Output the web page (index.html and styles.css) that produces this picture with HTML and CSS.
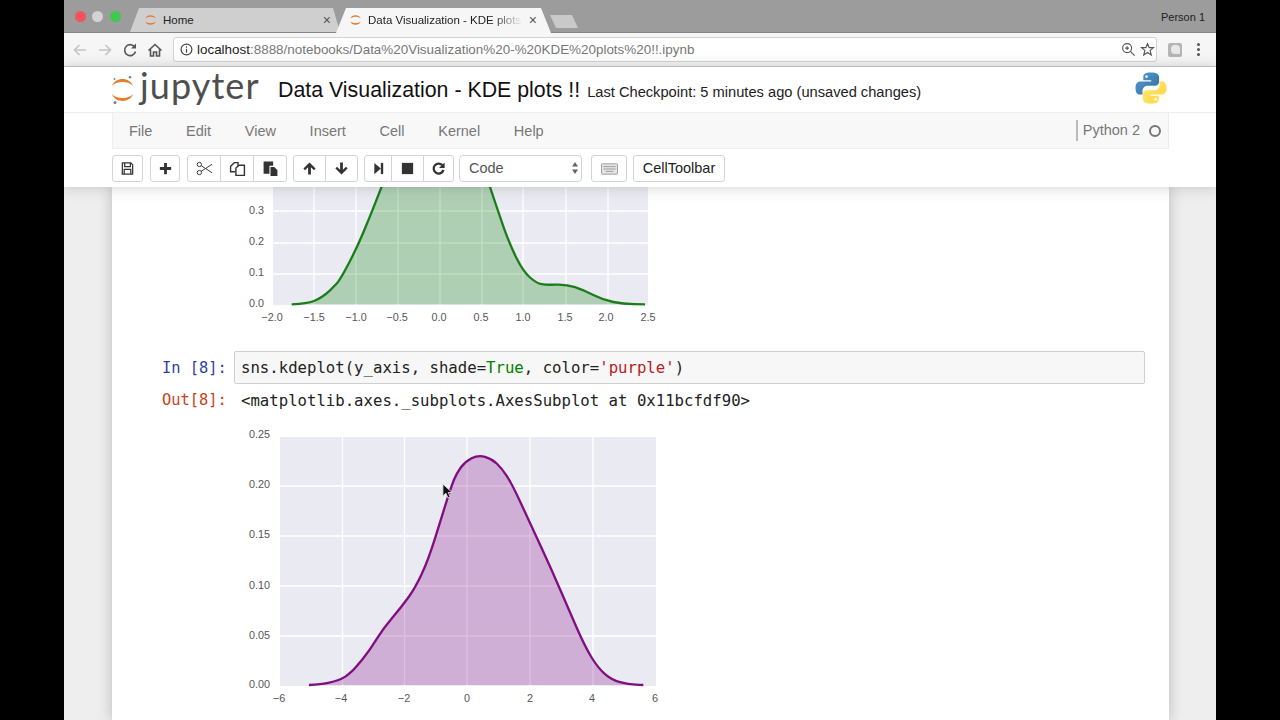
FILE: index.html
```html
<!DOCTYPE html>
<html lang="en">
  <head>
    <meta charset="UTF-8" />
    <title>Data Visualization - KDE plots !!</title>
    <link rel="stylesheet" href="styles.css">
  </head>
  <body>
    <div class="screen">
      <div class="tabstrip">
        <div class="traffic">
          <span class="light red"></span>
          <span class="light grey"></span>
          <span class="light green"></span>
        </div>
        <div class="tab home-tab">
          <svg class="favicon" viewBox="0 0 21 28"><path d="M0 11C3 2.500 18 2.500 21 11C17 6.500 4 6.500 0 11Z"/><path d="M0 17C3 25.500 18 25.500 21 17C17 21.500 4 21.500 0 17Z"/></svg>
          <span class="tab-title">Home</span>
          <span class="tab-close">×</span>
        </div>
        <div class="tab active-tab">
          <svg class="favicon" viewBox="0 0 21 28"><path d="M0 11C3 2.500 18 2.500 21 11C17 6.500 4 6.500 0 11Z"/><path d="M0 17C3 25.500 18 25.500 21 17C17 21.500 4 21.500 0 17Z"/></svg>
          <span class="tab-title fade">Data Visualization - KDE plots</span>
          <span class="tab-close">×</span>
        </div>
        <div class="new-tab"></div>
        <div class="person">Person 1</div>
      </div>

      <div class="navbar">
        <svg class="nav-icon" viewBox="0 0 16 16"><path class="off" d="M14 8H2.500M7.500 3L2.500 8L7.500 13"/></svg>
        <svg class="nav-icon" viewBox="0 0 16 16"><path class="off" d="M2 8H13.500M8.500 3L13.500 8L8.500 13"/></svg>
        <svg class="nav-icon" viewBox="0 0 16 16"><path d="M13 5.500A5.500 5.500 0 1 0 13.500 9.500"/><path class="solid" d="M14 1.500V6.500H9Z"/></svg>
        <svg class="nav-icon" viewBox="0 0 16 16"><path d="M1.500 8.500L8 2.500L14.500 8.500M3.500 7.500V14H6.500V10H9.500V14H12.500V7.500"/></svg>
        <div class="urlbar">
          <svg class="url-info" viewBox="0 0 14 14"><circle cx="7" cy="7" r="5.800"/><path d="M7 6.200V10.500M7 3.500V5"/></svg>
          <span class="url"><b>localhost</b>:8888/notebooks/Data%20Visualization%20-%20KDE%20plots%20!!.ipynb</span>
          <svg class="url-icon" viewBox="0 0 16 16"><circle cx="6.500" cy="6.500" r="4.800"/><path d="M10 10L14.500 14.500M4.500 6.500H8.500M6.500 4.500V8.500"/></svg>
          <svg class="url-icon" viewBox="0 0 16 16"><path d="M8 1.800L9.800 6H14.400L10.800 9L12 13.800L8 11.200L4 13.800L5.200 9L1.600 6H6.200Z"/></svg>
        </div>
        <div class="extension"><span class="blob"></span></div>
        <div class="dots"><span></span><span></span><span></span></div>
      </div>

      <div class="jp-header">
        <div class="title-row">
          <div class="logo">
            <svg class="logo-mark" viewBox="0 0 21 28">
              <path class="arc" d="M0 10C3 .700 18 .700 21 10C17 4.700 4 4.700 0 10Z"/>
              <path class="arc" d="M0 18C3 27.300 18 27.300 21 18C17 23.300 4 23.300 0 18Z"/>
              <circle class="moon" cx="18" cy="1.300" r="1.300"/>
              <circle class="moon" cx="2.500" cy="3" r="1"/>
              <circle class="moon" cx="3" cy="26.500" r="1.500"/>
            </svg>
            <span class="logo-text">jupyter</span>
          </div>
          <span class="nb-title">Data Visualization - KDE plots !!</span>
          <span class="checkpoint">Last Checkpoint: 5 minutes ago (unsaved changes)</span>
          <svg class="python-logo" viewBox="0 0 32 32">
            <defs>
              <linearGradient id="pyblue" x1="0" y1="0" x2="1" y2="1"><stop offset="0" stop-color="#5a9fd4"/><stop offset="1" stop-color="#306998"/></linearGradient>
              <linearGradient id="pyyellow" x1="0" y1="0" x2="1" y2="1"><stop offset="0" stop-color="#ffe873"/><stop offset="1" stop-color="#ffd43b"/></linearGradient>
            </defs>
            <path fill="url(#pyblue)" d="M15.800 .5c-6.200 0-7.500 2-7.500 4.500v3.300h7.900v1.200H5.100C2.200 9.500 .5 11.700 .5 16s1.700 6.600 4.200 6.600h2.800v-3.800c0-2.700 2.300-5 5-5h7.600c2.300 0 4-1.900 4-4.100V5c0-2.400-2.300-4.500-8.300-4.500z"/>
            <circle cx="11.500" cy="4.600" r="1.300" fill="#fff"/>
            <path fill="url(#pyyellow)" d="M16.200 31.500c6.200 0 7.500-2 7.500-4.500v-3.300h-7.900v-1.200h11.100c2.900 0 4.600-2.200 4.600-6.500s-1.700-6.600-4.200-6.600h-2.800v3.800c0 2.700-2.300 5-5 5h-7.600c-2.300 0-4 1.900-4 4.100V27c0 2.400 2.300 4.500 8.300 4.500z"/>
            <circle cx="20.500" cy="27.400" r="1.300" fill="#fff"/>
          </svg>
        </div>

        <div class="menubar">
          <span class="menu-item">File</span>
          <span class="menu-item">Edit</span>
          <span class="menu-item">View</span>
          <span class="menu-item">Insert</span>
          <span class="menu-item">Cell</span>
          <span class="menu-item">Kernel</span>
          <span class="menu-item">Help</span>
          <div class="kernel">
            <span class="kernel-name">Python 2</span>
            <span class="kernel-state"></span>
          </div>
        </div>

        <div class="toolbar">
          <div class="btn-group group-save">
            <button class="tool-btn">
              <svg class="tool-icon line" viewBox="0 0 16 16"><path d="M2.500 2H11.500L13.500 4V14H2.500ZM5 2V6H11V2M4.500 14V9H11.500V14"/></svg>
            </button>
          </div>
          <div class="btn-group group-add">
            <button class="tool-btn">
              <svg class="tool-icon" viewBox="0 0 16 16"><path d="M6.500 2H9.500V6.500H14V9.500H9.500V14H6.500V9.500H2V6.500H6.500Z"/></svg>
            </button>
          </div>
          <div class="btn-group group-edit">
            <button class="tool-btn">
              <svg class="tool-icon line thin" viewBox="0 0 18 16"><circle cx="3.500" cy="3.700" r="2.300"/><circle cx="3.500" cy="12.300" r="2.300"/><path d="M5.500 5L17 12.500M5.500 11L17 3.500"/></svg>
            </button>
            <button class="tool-btn">
              <svg class="tool-icon tall line" viewBox="0 0 16 16"><path d="M6 11H1.500V6L5 2.500H8.500V5.500"/><path d="M6.500 7.500L9.500 5H14.500V14.500H6.500Z"/></svg>
            </button>
            <button class="tool-btn">
              <svg class="tool-icon tall" viewBox="0 0 16 16"><path d="M1.500 1.500H10.500V5.500H7V13H1.500Z"/><path d="M8 6.500H11.500L14.500 9.500V15H8Z"/></svg>
            </button>
          </div>
          <div class="btn-group group-move">
            <button class="tool-btn">
              <svg class="tool-icon" viewBox="0 0 16 16"><path d="M8 1.500L14.500 8L12.800 9.800L9.500 6.600V14.500H6.500V6.600L3.200 9.800L1.500 8Z"/></svg>
            </button>
            <button class="tool-btn">
              <svg class="tool-icon" viewBox="0 0 16 16"><path d="M8 14.500L1.500 8L3.200 6.200L6.500 9.400V1.500H9.500V9.400L12.800 6.200L14.500 8Z"/></svg>
            </button>
          </div>
          <div class="btn-group group-run">
            <button class="tool-btn run-step">
              <svg class="tool-icon" viewBox="0 0 16 16"><path d="M3.500 2L10.500 8L3.500 14Z"/><path d="M10.500 2H13V14H10.500Z"/></svg>
            </button>
            <button class="tool-btn run-stop">
              <svg class="tool-icon" viewBox="0 0 16 16"><path d="M2 2H14V14H2Z"/></svg>
            </button>
            <button class="tool-btn run-redo">
              <svg class="tool-icon" viewBox="0 0 16 16"><path class="redo-arc" d="M12.500 5A5.300 5.300 0 1 0 13.300 9.500"/><path d="M14.500 1.500V7.500H8.500Z"/></svg>
            </button>
          </div>
          <div class="cell-type">
            <span>Code</span>
            <svg class="carets" viewBox="0 0 8 14"><path d="M4 1L7 5.500H1ZM4 13L1 8.500H7Z"/></svg>
          </div>
          <button class="tool-btn keyboard">
            <svg class="kbd-icon" viewBox="0 0 18 12"><rect x=".5" y=".5" width="17" height="11" rx="1"/><path d="M2.500 3.500H15.500M2.500 6H15.500M5 8.500H13"/></svg>
          </button>
          <button class="tool-btn celltoolbar">CellToolbar</button>
        </div>
      </div>

      <div class="notebook-area">
        <div class="notebook">
          <svg class="plot plot-green" width="440" height="145" viewBox="230 187 440 145">
            <rect class="axes" x="273" y="187" width="375" height="118"/>
            <path class="grid" d="M314 187V305M356 187V305M398 187V305M440 187V305M482 187V305M523 187V305M566 187V305M608 187V305M273 211H648M273 243H648M273 274H648"/>
            <path class="kde kde-green" d="M291.700 304.300Q300 304 305 303.200Q310 302.500 314 301Q318 299.500 322 296.800Q326 294 329.500 290.800Q333 287.500 336.500 283.800Q340 280 348.300 264.200Q356.700 248.300 363.300 232.500Q370 216.700 375.800 201.700Q381.700 186.700 388 170L395 150L478 150L484 170Q490 186.700 494 199Q498.300 211.700 504 228.400Q510 245 516.600 258.300Q523.300 271.700 530 277.500Q536.700 283.300 541.700 284.200Q546.700 285 556.700 284.600Q566.700 284.300 575 287.200Q583.300 290 593.300 295Q603.300 300 613.300 302Q623.300 304 634 304.200Q640 304.300 645 304.300"/>
            <g class="tick tick-y">
              <text x="264" y="214">0.3</text>
              <text x="264" y="245">0.2</text>
              <text x="264" y="276">0.1</text>
              <text x="264" y="307">0.0</text>
            </g>
            <g class="tick tick-x">
              <text x="272" y="321">−2.0</text>
              <text x="314" y="321">−1.5</text>
              <text x="356" y="321">−1.0</text>
              <text x="397" y="321">−0.5</text>
              <text x="439" y="321">0.0</text>
              <text x="481" y="321">0.5</text>
              <text x="523" y="321">1.0</text>
              <text x="565" y="321">1.5</text>
              <text x="606" y="321">2.0</text>
              <text x="648" y="321">2.5</text>
            </g>
          </svg>

          <div class="cell">
            <div class="prompt in-prompt">In [8]:</div>
            <div class="input-area">sns.kdeplot(y_axis, shade=<span class="kw">True</span>, color=<span class="str">'purple'</span>)</div>
          </div>
          <div class="output">
            <div class="prompt out-prompt">Out[8]:</div>
            <div class="output-text">&lt;matplotlib.axes._subplots.AxesSubplot at 0x11bcfdf90&gt;</div>
          </div>

          <svg class="plot plot-purple" width="440" height="300" viewBox="235 420 440 300">
            <rect class="axes" x="280" y="437" width="376" height="249"/>
            <path class="grid" d="M342.500 437V686M404.500 437V686M467 437V686M530 437V686M593 437V686M280 486H656M280 536H656M280 586H656M280 636H656"/>
            <path class="kde kde-purple" d="M309 685Q322 684.300 326.900 683.200Q331.700 682.300 337 680.500Q342.300 678.700 345.700 676.400Q349 674 352 671.200Q355 668.300 362.500 659.200Q370 650 376.600 639.200Q383.300 628.300 392.500 617.500Q401.700 606.700 408.300 597.500Q415 588.300 421.600 574.200Q428.300 560 435 538.400Q441.700 516.700 446.700 500.900Q451.700 485 454.200 479.200Q456.700 473.300 460.800 467.500Q465 461.700 471.600 458.300Q478.300 455 485 456.900Q491.700 458.800 496.700 463.500Q501.700 468.300 506.700 475.800Q511.700 483.300 521.700 505Q531.700 526.700 541.700 548.300Q551.700 570 560 589.200Q568.300 608.300 576.600 627.500Q585 646.700 591.600 657.500Q598.300 668.300 605 674.200Q611.700 680 620 682.200Q628.300 684.300 635.800 684.700Q640 685 643.300 685"/>
            <g class="tick tick-y">
              <text x="270" y="438">0.25</text>
              <text x="270" y="488">0.20</text>
              <text x="270" y="538">0.15</text>
              <text x="270" y="589">0.10</text>
              <text x="270" y="639">0.05</text>
              <text x="270" y="688">0.00</text>
            </g>
            <g class="tick tick-x">
              <text x="279" y="702">−6</text>
              <text x="341" y="702">−4</text>
              <text x="404" y="702">−2</text>
              <text x="467" y="702">0</text>
              <text x="530" y="702">2</text>
              <text x="592" y="702">4</text>
              <text x="655" y="702">6</text>
            </g>
          </svg>
        </div>
        <svg class="cursor" viewBox="0 0 12 17"><path d="M1 1V14L4.300 11L6.500 16L9 15L6.800 10.200L11 10Z"/></svg>
      </div>
    </div>
  </body>
</html>
```

FILE: styles.css
```css
html,
body {
  margin: 0;
  padding: 0;
  height: 720px;
  overflow: hidden;
  background-color: #000;
}

body {
  font-family: "Liberation Sans", Arial, sans-serif;
}

.screen {
  width: 1152px;
  height: 720px;
  margin: 0 auto;
  display: flex;
  flex-direction: column;
  overflow: hidden;
  background-color: #eee;
}

/* browser tabs */
.tabstrip {
  height: 33px;
  box-sizing: border-box;
  flex: none;
  display: flex;
  align-items: flex-end;
  background-color: #9c9c9c;
  border-bottom: 1px solid #858585;
}

.traffic {
  align-self: center;
  display: flex;
  gap: 6.5px;
  width: 66px;
  padding-left: 10.5px;
  box-sizing: border-box;
}

.light {
  width: 11px;
  height: 11px;
  border-radius: 50%;
}

.light.red {
  background-color: #f2545b;
}

.light.grey {
  background-color: #d3d3d3;
}

.light.green {
  background-color: #3fc950;
}

.tab {
  height: 24px;
  box-sizing: border-box;
  display: flex;
  align-items: center;
  gap: 7px;
  font-size: 11.5px;
  color: #222;
}

.home-tab {
  width: 210px;
  padding: 0 9px 0 15px;
  background-color: #cfcfcf;
  clip-path: polygon(0 100%, 9px 0, 203px 0, 100% 100%);
}

.active-tab {
  width: 215px;
  height: 25px;
  margin-left: -4px;
  margin-bottom: -1px;
  padding: 0 14px 1px;
  background-color: #f6f6f6;
  clip-path: polygon(0 100%, 10px 0, 205px 0, 100% 100%);
}

.favicon {
  width: 11px;
  height: 14px;
  flex: none;
  fill: #e0782f;
}

.tab-title {
  flex: 1;
  white-space: nowrap;
}

.tab-title.fade {
  -webkit-mask-image: linear-gradient(to right, #000 125px, transparent 155px);
  mask-image: linear-gradient(to right, #000 125px, transparent 155px);
}

.tab-close {
  font-size: 14px;
  line-height: 14px;
  color: #555;
}

.new-tab {
  width: 28px;
  height: 13px;
  margin: 0 0 4px -1px;
  background-color: #c9c9c9;
  clip-path: polygon(0 0, 22px 0, 100% 100%, 6px 100%);
}

.person {
  align-self: center;
  margin: 1px 0 0 auto;
  padding-right: 11px;
  font-size: 11px;
  color: #222;
}

/* address bar */
.navbar {
  height: 34px;
  box-sizing: border-box;
  flex: none;
  display: flex;
  align-items: center;
  padding-left: 8px;
  background-color: #f6f6f6;
  border-bottom: 1px solid #c9c9c9;
}

.nav-icon {
  width: 16px;
  height: 16px;
  margin-right: 9px;
  fill: none;
  stroke: #555;
  stroke-width: 1.6;
}

.nav-icon .off {
  stroke: #c4c4c4;
}

.nav-icon .solid {
  fill: #555;
  stroke: none;
}

.urlbar {
  width: 984px;
  height: 25px;
  box-sizing: border-box;
  margin-left: 1px;
  display: flex;
  align-items: center;
  padding: 0 1px 0 6px;
  background-color: #fff;
  border: 1px solid #d2d2d2;
  border-radius: 3px;
}

.url-info {
  width: 13px;
  height: 13px;
  fill: none;
  stroke: #444;
  stroke-width: 1.300;
}

.url {
  flex: 1;
  margin-left: 4px;
  font-size: 13.430px;
  color: #777;
  white-space: nowrap;
}

.url b {
  font-weight: normal;
  color: #222;
}

.url-icon {
  width: 15px;
  height: 15px;
  margin-left: 4px;
  fill: none;
  stroke: #555;
  stroke-width: 1.200;
}

.extension {
  width: 14px;
  height: 14px;
  margin-left: 11px;
  display: flex;
  align-items: center;
  justify-content: center;
  background-color: #b5b5b5;
  border-radius: 2px;
}

.blob {
  width: 9px;
  height: 9px;
  background-color: #e8e8e8;
  border-radius: 4px 4px 1px 4px;
}

.dots {
  margin-left: 15px;
  display: flex;
  flex-direction: column;
  gap: 2px;
}

.dots span {
  width: 3px;
  height: 3px;
  background-color: #555;
  border-radius: 50%;
}

/* jupyter header */
.jp-header {
  position: relative;
  z-index: 2;
  flex: none;
  height: 120px;
  background-color: #fff;
  box-shadow: 0 0 12px 1px rgba(87, 87, 87, 0.25);
}

.title-row {
  height: 46px;
  box-sizing: border-box;
  display: flex;
  align-items: center;
  padding: 0 49px 0 48px;
  border-bottom: 1px solid #eee;
}

.logo {
  width: 166px;
  flex: none;
  display: flex;
  align-items: center;
  gap: 7px;
}

.logo-mark {
  width: 21px;
  height: 28px;
  overflow: visible;
}

.arc {
  fill: #e67e2e;
}

.moon {
  fill: #7b7f85;
}

.logo-text {
  font-family: Lato, sans-serif;
  font-size: 36px;
  line-height: 40px;
  margin-top: -10px;
  letter-spacing: 1.100px;
  color: #4e4e4e;
}

.nb-title {
  font-size: 21.350px;
  color: #111;
  margin-top: 1px;
}

.checkpoint {
  margin: 5px 0 0 7px;
  font-size: 14.670px;
  color: #222;
}

.python-logo {
  width: 32px;
  height: 32px;
  margin: -3px 0 0 auto;
}

.menubar {
  height: 36px;
  box-sizing: border-box;
  margin: 0 47px 0 48px;
  display: flex;
  align-items: center;
  gap: 33.700px;
  padding: 0 7px 0 16px;
  font-size: 14.500px;
  color: #777;
  background-color: #f8f8f8;
  border: 1px solid #eee;
  border-top: none;
}

.kernel {
  margin-left: auto;
  display: flex;
  align-items: center;
  gap: 9px;
}

.kernel-name {
  padding-left: 5px;
  line-height: 21px;
  border-left: 2px solid #bbb;
}

.kernel-state {
  width: 8px;
  height: 8px;
  border: 2px solid #777;
  border-radius: 50%;
}

.toolbar {
  height: 27px;
  margin: 6px 0 0 48px;
  display: flex;
}

.btn-group {
  display: flex;
  background-color: #fff;
}

.group-save .tool-btn {
  width: 31px;
}

.group-add {
  margin-left: 7px;
}

.group-add .tool-btn {
  width: 30px;
}

.group-edit {
  margin-left: 7px;
}

.group-edit .tool-btn {
  width: 34px;
}

.group-move {
  margin-left: 6px;
}

.group-move .tool-btn {
  width: 33px;
}

.group-run {
  margin-left: 6px;
}

.group-run .run-step {
  width: 28px;
}

.group-run .run-stop {
  width: 33px;
}

.group-run .run-redo {
  width: 31px;
}

.tool-btn {
  height: 27px;
  box-sizing: border-box;
  padding: 0;
  display: flex;
  align-items: center;
  justify-content: center;
  font-family: inherit;
  font-size: 14.500px;
  color: #222;
  background-color: #fff;
  border: 1px solid #d4d4d4;
  border-radius: 3px;
}

.btn-group .tool-btn + .tool-btn {
  margin-left: -1px;
  border-top-left-radius: 0;
  border-bottom-left-radius: 0;
}

.btn-group .tool-btn:not(:last-child) {
  border-top-right-radius: 0;
  border-bottom-right-radius: 0;
}

.tool-icon {
  width: 15px;
  height: 15px;
  fill: #333;
}

.tool-icon.tall {
  width: 17px;
  height: 17px;
}

.tool-icon.line {
  fill: none;
  stroke: #333;
  stroke-width: 1.300;
}

.tool-icon.thin {
  width: 17px;
  stroke-width: 1;
}

.redo-arc {
  fill: none;
  stroke: #333;
  stroke-width: 2.400;
}

.cell-type {
  width: 123px;
  height: 27px;
  box-sizing: border-box;
  margin-left: 5px;
  display: flex;
  align-items: center;
  justify-content: space-between;
  padding: 0 2px 1px 9px;
  font-size: 14.500px;
  color: #555;
  background-color: #fff;
  border: 1px solid #d4d4d4;
  border-radius: 4px;
}

.carets {
  width: 8px;
  height: 14px;
  fill: #666;
}

.keyboard {
  width: 36px;
  margin-left: 9px;
}

.kbd-icon {
  width: 17px;
  height: 12px;
  fill: #e4e4e4;
  stroke: #888;
  stroke-width: 0.800;
}

.celltoolbar {
  width: 92px;
  margin-left: 6px;
  padding-bottom: 1px;
}

/* notebook */
.notebook-area {
  position: relative;
  flex: 1;
  padding: 0 47px 0 48px;
  overflow: hidden;
}

.notebook {
  height: 100%;
  background-color: #fff;
  box-shadow: 0 0 12px 1px rgba(87, 87, 87, 0.3);
}

.plot {
  display: block;
}

.plot-green {
  margin-left: 118px;
}

.plot-purple {
  margin: 8px 0 0 123px;
}

.axes {
  fill: #eaeaf2;
}

.grid {
  fill: none;
  stroke: #fff;
  stroke-width: 1.300;
}

.kde {
  stroke-width: 2.300;
  stroke-linejoin: round;
}

.kde-green {
  fill: rgba(0, 128, 0, 0.25);
  stroke: #1a7d1a;
}

.kde-purple {
  fill: rgba(128, 0, 128, 0.25);
  stroke: #7f0f80;
}

.tick text {
  font-size: 10.800px;
  fill: #555;
}

.tick-y text {
  text-anchor: end;
}

.tick-x text {
  text-anchor: middle;
}

.cell {
  margin: 19px 24px 0 50px;
  display: flex;
  align-items: center;
}

.output {
  height: 24px;
  margin: 4px 24px 0 50px;
  display: flex;
  align-items: center;
}

.prompt {
  width: 72px;
  flex: none;
  font-family: "DejaVu Sans Mono", "Liberation Mono", monospace;
  font-size: 15.400px;
}

.in-prompt {
  color: #303f9f;
}

.out-prompt {
  color: #c8421b;
}

.input-area {
  flex: 1;
  height: 33px;
  box-sizing: border-box;
  padding: 0 6px;
  font-family: "DejaVu Sans Mono", "Liberation Mono", monospace;
  font-size: 15.670px;
  line-height: 31px;
  color: #222;
  background-color: #f7f7f7;
  border: 1px solid #cfcfcf;
  border-radius: 2px;
}

.output-text {
  padding-left: 7px;
  font-family: "DejaVu Sans Mono", "Liberation Mono", monospace;
  font-size: 15.670px;
  color: #222;
}

.kw {
  color: #008000;
}

.str {
  color: #ba2121;
}

.cursor {
  position: absolute;
  left: 378px;
  top: 296px;
  width: 11px;
  height: 16px;
  fill: #111;
  stroke: #ddd;
  stroke-width: 1;
}
```
